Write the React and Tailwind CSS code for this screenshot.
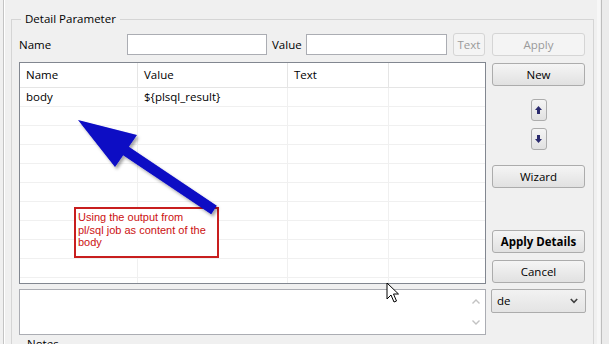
import React from "react";

const rows = [["body", "${plsql_result}", ""], ...Array.from({ length: 10 }, () => ["", "", ""])];

function Btn({ children, disabled, bold, className = "" }) {
  return (
    <button
      className={`flex items-center justify-center rounded-[3px] border leading-none ${
        disabled
          ? "border-[#d5d5d5] bg-[#f4f4f4] text-[#9a9a9a]"
          : "border-[#acacac] bg-gradient-to-b from-[#f5f5f5] to-[#e1e1e1] text-black"
      } ${bold ? "font-bold" : ""} ${className}`}
    >
      {children}
    </button>
  );
}

function Arrow({ up }) {
  return (
    <svg width="7" height="8" viewBox="0 0 7 8">
      <path
        d={up ? "M3.5 0 L7 4 H5 V8 H2 V4 H0 Z" : "M3.5 8 L7 4 H5 V0 H2 V4 H0 Z"}
        fill="#2b2b6e"
      />
    </svg>
  );
}

export default function App() {
  return (
    <div className="relative h-[344px] w-[609px] overflow-hidden bg-[#f0f0f0] font-['Open_Sans',sans-serif] text-[11.5px] text-black">
      <div className="flex h-full">
        <div className="w-[3px]" />
        <div className="w-px bg-[#c4c4c4]" />
        <div className="w-px bg-white" />

        {/* Detail Parameter group */}
        <fieldset className="ml-[6px] mt-[11px] h-[400px] w-[583px] border border-[#d5d5d5] px-[7px]">
          <legend className="ml-[2px] px-[4px] leading-[16px]">Detail Parameter</legend>

          <div className="mt-[6px] grid grid-cols-[467px_93px] gap-x-[6px]">
            {/* name / value row */}
            <div className="flex h-[23px] items-center">
              <span className="w-[108px]">Name</span>
              <div className="h-[21px] w-[140px] border border-[#abadb3] bg-white" />
              <span className="w-[39px] pl-[5px]">Value</span>
              <div className="h-[21px] w-[141px] border border-[#abadb3] bg-white" />
              <Btn disabled className="ml-[6px] h-[23px] w-[32px]">
                Text
              </Btn>
            </div>
            <Btn disabled className="h-[23px] w-full">
              Apply
            </Btn>

            {/* table */}
            <div className="mt-[6px] h-[222px] overflow-hidden border border-[#828790] bg-white">
              <div className="grid h-[25px] grid-cols-[118px_150px_101px_1fr] border-b border-[#e5e5e5]">
                <div className="flex items-center border-r border-[#e5e5e5] pl-[6px]">Name</div>
                <div className="flex items-center border-r border-[#e5e5e5] pl-[6px]">Value</div>
                <div className="flex items-center border-r border-[#e5e5e5] pl-[6px]">Text</div>
                <div />
              </div>
              {rows.map((r, i) => (
                <div
                  key={i}
                  className="grid h-[19px] grid-cols-[118px_150px_101px_1fr] border-b border-[#f0f0f0]"
                >
                  <div className="flex items-center border-r border-[#f0f0f0] pl-[6px]">{r[0]}</div>
                  <div className="flex items-center border-r border-[#f0f0f0] pl-[6px]">{r[1]}</div>
                  <div className="flex items-center border-r border-[#f0f0f0] pl-[6px]">{r[2]}</div>
                  <div />
                </div>
              ))}
            </div>

            {/* side buttons */}
            <div className="mt-[6px] flex h-[222px] flex-col">
              <Btn className="mt-px h-[23px] w-full">New</Btn>
              <Btn className="mt-[13px] h-[22px] w-[16px] self-center">
                <Arrow up />
              </Btn>
              <Btn className="mt-[7px] h-[22px] w-[16px] self-center">
                <Arrow />
              </Btn>
              <Btn className="mt-[15px] h-[23px] w-full">Wizard</Btn>
              <Btn bold className="mt-auto h-[23px] w-full">
                Apply Details
              </Btn>
              <Btn className="mt-[7px] mb-px h-[23px] w-full">Cancel</Btn>
            </div>

            {/* text area + language */}
            <div className="mt-[5px] flex h-[46px] justify-end border border-[#abadb3] bg-white">
              <div className="flex w-[19px] flex-col items-center justify-between py-[9px]">
                <svg width="8" height="5" viewBox="0 0 8 5">
                  <path d="M0.5 4.5 L4 1 L7.5 4.5" fill="none" stroke="#c2c2c2" strokeWidth="1.4" />
                </svg>
                <svg width="8" height="5" viewBox="0 0 8 5">
                  <path d="M0.5 0.5 L4 4 L7.5 0.5" fill="none" stroke="#c2c2c2" strokeWidth="1.4" />
                </svg>
              </div>
            </div>
            <div className="mt-[5px] -mx-px flex h-[24px] items-center justify-between rounded-[2px] border border-[#acacac] bg-gradient-to-b from-[#f2f2f2] to-[#e4e4e4] pl-[5px] pr-[7px]">
              <span>de</span>
              <svg width="8" height="6" viewBox="0 0 8 6">
                <path d="M0.8 1 L4 4.4 L7.2 1" fill="none" stroke="#404040" strokeWidth="1.6" />
              </svg>
            </div>

            <div className="col-span-2 mt-px pl-[8px] leading-[16px]">Notes</div>
          </div>
        </fieldset>

        <div className="ml-[3px] w-[3px] bg-[#f7f7f7]" />
        <div className="ml-[1px] w-px bg-[#bdbdbd]" />
        <div className="flex-1 bg-[#ebebeb]" />
      </div>

      {/* annotation callout */}
      <div className="absolute left-[74px] top-[207px] h-[51px] w-[145px] border-2 border-[#c81e1e] bg-white px-[2px] pt-[2px] font-['Liberation_Sans',Arial,sans-serif] text-[11px] leading-[12.5px] text-[#cc1111]">
        Using the output from
        <br />
        pl/sql job as content of the
        <br />
        body
      </div>

      {/* annotation arrow */}
      <svg className="pointer-events-none absolute left-0 top-0" width="609" height="344">
        <defs>
          <filter id="sh" x="-20%" y="-20%" width="140%" height="140%">
            <feDropShadow dx="2" dy="2.5" stdDeviation="1.5" floodColor="#000" floodOpacity="0.35" />
          </filter>
        </defs>
        <polygon
          points="78,120 137,135 128.8,146.8 216.8,205.8 211.2,214.2 123.2,155.2 115,167"
          fill="#0808c4"
          filter="url(#sh)"
        />
      </svg>

      {/* mouse cursor */}
      <svg className="pointer-events-none absolute left-[386px] top-[282px]" width="14" height="21" viewBox="0 0 14 21">
        <path
          d="M1 1 L1 17 L5 13 L8 20 L10.5 19 L7.5 12 L12.5 12 Z"
          fill="#fff"
          stroke="#000"
          strokeWidth="1"
          strokeLinejoin="round"
        />
      </svg>
    </div>
  );
}
